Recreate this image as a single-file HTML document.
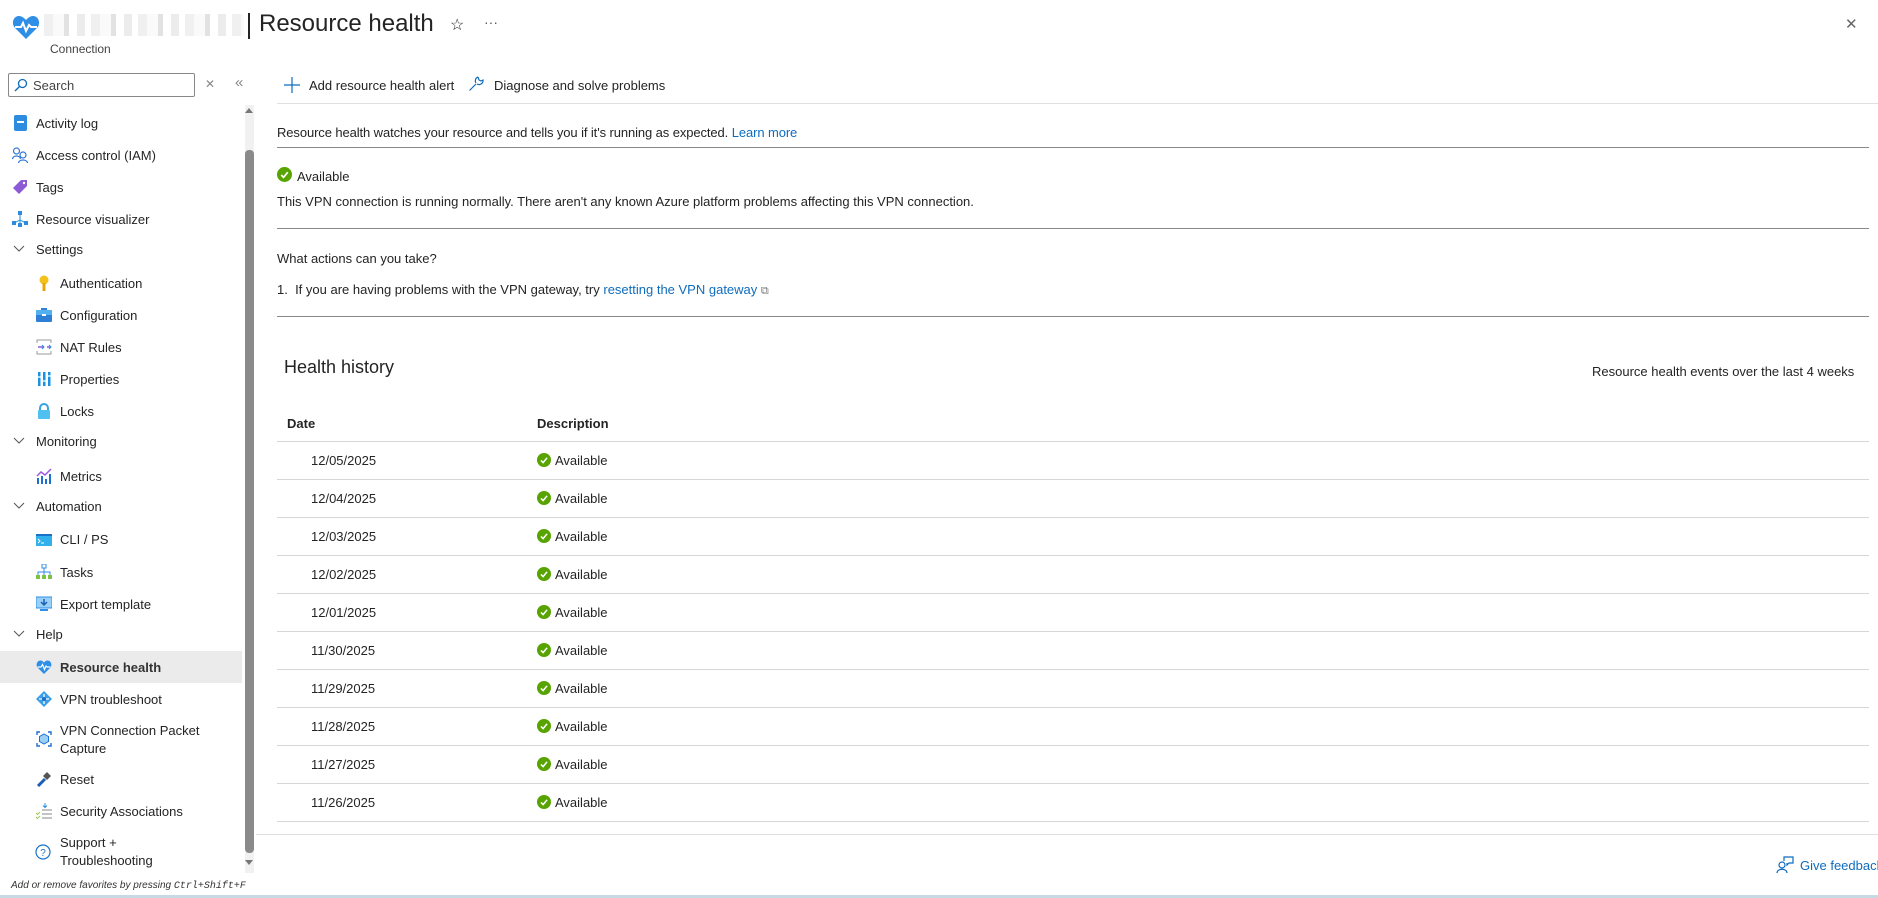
<!DOCTYPE html>
<html><head><meta charset="utf-8"><style>
*{margin:0;padding:0;box-sizing:border-box}
body{width:1878px;height:898px;overflow:hidden;background:#fff;font-family:"Liberation Sans",sans-serif;font-size:13px;color:#242424;position:relative}
.a{position:absolute;white-space:nowrap}
.ic{position:absolute;width:16px;height:16px}
.hl{position:absolute;left:277px;width:1592px;height:1px;background:#8a8886}
.rl{position:absolute;left:277px;width:1592px;height:1px;background:#d6d6d6}
.blue{color:#0f6cbd}
</style></head><body>
<!-- header -->
<svg class="ic" style="left:12px;top:14px;width:28px;height:26px" viewBox="0 0 28 26"><path d="M14 25 L3 14 C-1 10 1 2 7 2 C10 2 12 4 14 6 C16 4 18 2 21 2 C27 2 29 10 25 14 Z" fill="#2f8ee5"/><path d="M3 13 H9 L11 9 L14 17 L17 11 L19 13 H25" fill="none" stroke="#fff" stroke-width="2"/></svg>
<div class="a" style="left:44px;top:14px;width:200px;height:22px;background:repeating-linear-gradient(90deg,#f0f0f0 0 9px,#fafafa 9px 20px,#e2e2e2 20px 25px,#fff 25px 33px,#ececec 33px 41px,#fff 41px 47px)"></div>
<div class="a" style="left:248px;top:13px;width:2px;height:26px;background:#242424"></div>
<div class="a" style="left:259px;top:10px;font-size:24px">Resource health</div>
<div class="a" style="left:450px;top:15px;font-size:16px">☆</div>
<div class="a" style="left:484px;top:14px;font-size:14px;color:#555">···</div>
<div class="a" style="left:50px;top:42px;font-size:12px;color:#444">Connection</div>
<div class="a" style="left:1845px;top:15px;font-size:15px;color:#666">✕</div>
<!-- search -->
<div class="a" style="left:8px;top:73px;width:187px;height:24px;border:1px solid #8a8886;border-radius:2px"></div>
<svg class="ic" style="left:14px;top:78px;width:14px;height:14px" viewBox="0 0 14 14"><circle cx="8.5" cy="5.5" r="4" fill="none" stroke="#0f6cbd" stroke-width="1.3"/><path d="M5.5 8.5 L1 13" stroke="#0f6cbd" stroke-width="1.4"/></svg>
<div class="a" style="left:33px;top:78px;font-size:13px;color:#444">Search</div>
<div class="a" style="left:205px;top:77px;font-size:12px;color:#888">✕</div>
<div class="a" style="left:235px;top:74px;font-size:15px;color:#888">«</div>
<!-- scrollbar -->
<div class="a" style="left:245px;top:105px;width:9px;height:768px;background:#f1f1f1"></div>
<div class="a" style="left:245px;top:150px;width:9px;height:703px;background:#8a8a8a;border-radius:4px"></div>
<div class="a" style="left:245px;top:108px;width:0;height:0;border:4px solid transparent;border-bottom:5px solid #777;border-top:0"></div>
<div class="a" style="left:245px;top:860px;width:0;height:0;border:4px solid transparent;border-top:5px solid #777;border-bottom:0"></div>
<!-- sidebar -->
<div class="a" style="left:0;top:651px;width:242px;height:32px;background:#ebebeb"></div>
<svg class="ic" style="left:13px;top:115px" viewBox="0 0 16 16"><rect x="1" y="0" width="13" height="16" rx="2" fill="#2d8be0"/><rect x="4" y="6" width="7" height="2" fill="#fff"/></svg>
<div class="a" style="left:36px;top:116px">Activity log</div>
<svg class="ic" style="left:12px;top:147px" viewBox="0 0 16 16" fill="none" stroke="#2f78d4" stroke-width="1.2"><circle cx="4.5" cy="4" r="3"/><path d="M0.5 12 C1 8 8 8 8.5 12"/><circle cx="11" cy="8" r="3"/><path d="M6.5 16 C7 12 15 12 15.5 16"/></svg>
<div class="a" style="left:36px;top:148px">Access control (IAM)</div>
<svg class="ic" style="left:12px;top:179px" viewBox="0 0 16 16"><path d="M9 1 L15 1 L15 7 L7 15 L1 9 Z" fill="#8d5ad6"/><circle cx="12" cy="4" r="1.2" fill="#fff"/></svg>
<div class="a" style="left:36px;top:180px">Tags</div>
<svg class="ic" style="left:12px;top:211px" viewBox="0 0 16 16"><path d="M8 3 V9 M2 12 L8 9 L14 12 M8 9 V14" stroke="#3aa0e0" stroke-width="1.2" fill="none"/><rect x="6" y="0" width="4" height="4" fill="#2d8be0"/><rect x="0" y="10" width="4" height="4" fill="#2d8be0"/><rect x="12" y="10" width="4" height="4" fill="#2d8be0"/><rect x="6" y="12" width="4" height="4" fill="#2d8be0"/></svg>
<div class="a" style="left:36px;top:212px">Resource visualizer</div>
<svg class="ic" style="left:13px;top:243px;width:12px;height:10px" viewBox="0 0 12 10"><path d="M1 3 L6 8 L11 3" stroke="#555" fill="none"/></svg>
<div class="a" style="left:36px;top:242px">Settings</div>
<svg class="ic" style="left:36px;top:275px" viewBox="0 0 16 16"><circle cx="8" cy="5" r="4.5" fill="#f2c21b"/><rect x="6.5" y="8" width="3" height="8" fill="#e8a50b"/></svg>
<div class="a" style="left:60px;top:276px">Authentication</div>
<svg class="ic" style="left:36px;top:307px" viewBox="0 0 16 16"><rect x="0" y="3" width="16" height="12" rx="1" fill="#2f7fd6"/><rect x="0" y="3" width="16" height="5" fill="#53b0ef"/><rect x="5" y="1" width="6" height="2" fill="#2f7fd6"/><rect x="6" y="7" width="4" height="2" fill="#fff"/></svg>
<div class="a" style="left:60px;top:308px">Configuration</div>
<svg class="ic" style="left:36px;top:339px" viewBox="0 0 16 16"><path d="M1 4 V1 H15 V4 M1 12 V15 H15 V12" stroke="#999" fill="none"/><path d="M2 8 H8 M11 8 H15" stroke="#8d5ad6" stroke-width="1.5"/><path d="M6 6 L8 8 L6 10 M13 6 L15 8 L13 10" stroke="#2f8ee5" fill="none"/></svg>
<div class="a" style="left:60px;top:340px">NAT Rules</div>
<svg class="ic" style="left:36px;top:371px" viewBox="0 0 16 16"><rect x="2" y="1" width="2.5" height="14" fill="#1e90e0"/><rect x="7" y="1" width="2.5" height="14" fill="#1e90e0"/><rect x="12" y="1" width="2.5" height="14" fill="#1e90e0"/><rect x="2" y="5" width="2.5" height="2" fill="#9fe1f8"/><rect x="7" y="9" width="2.5" height="2" fill="#9fe1f8"/><rect x="12" y="4" width="2.5" height="2" fill="#9fe1f8"/></svg>
<div class="a" style="left:60px;top:372px">Properties</div>
<svg class="ic" style="left:36px;top:403px" viewBox="0 0 16 16"><path d="M4 8 V5 A4 4 0 0 1 12 5 V8" stroke="#36a4e0" stroke-width="2" fill="none"/><rect x="2" y="7" width="12" height="9" rx="1" fill="#50c0f0"/></svg>
<div class="a" style="left:60px;top:404px">Locks</div>
<svg class="ic" style="left:13px;top:435px;width:12px;height:10px" viewBox="0 0 12 10"><path d="M1 3 L6 8 L11 3" stroke="#555" fill="none"/></svg>
<div class="a" style="left:36px;top:434px">Monitoring</div>
<svg class="ic" style="left:36px;top:468px" viewBox="0 0 16 16"><rect x="1" y="10" width="2" height="6" fill="#1e6fd0"/><rect x="5" y="8" width="2" height="8" fill="#1e6fd0"/><rect x="9" y="11" width="2" height="5" fill="#1e6fd0"/><rect x="13" y="6" width="2" height="10" fill="#1e6fd0"/><path d="M1 8 L5 4 L9 7 L15 1" stroke="#9b5de5" stroke-width="1.5" fill="none"/></svg>
<div class="a" style="left:60px;top:469px">Metrics</div>
<svg class="ic" style="left:13px;top:500px;width:12px;height:10px" viewBox="0 0 12 10"><path d="M1 3 L6 8 L11 3" stroke="#555" fill="none"/></svg>
<div class="a" style="left:36px;top:499px">Automation</div>
<svg class="ic" style="left:36px;top:532px" viewBox="0 0 16 16"><rect x="0" y="2" width="16" height="12" fill="#32b0ec"/><rect x="0" y="2" width="16" height="2" fill="#1a73c8"/><path d="M2 7 L4 9 L2 11 M5 11 H8" stroke="#fff" fill="none"/></svg>
<div class="a" style="left:60px;top:532px">CLI / PS</div>
<svg class="ic" style="left:36px;top:564px" viewBox="0 0 16 16"><rect x="6" y="0" width="4" height="4" fill="none" stroke="#2f8ee5"/><path d="M8 4 V8 M2 12 V8 H14 V12 M8 8 V12" stroke="#2f8ee5" fill="none"/><rect x="0" y="11" width="4" height="4" fill="#7cc243"/><rect x="6" y="11" width="4" height="4" fill="#7cc243"/><rect x="12" y="11" width="4" height="4" fill="#7cc243"/></svg>
<div class="a" style="left:60px;top:565px">Tasks</div>
<svg class="ic" style="left:36px;top:596px" viewBox="0 0 16 16"><rect x="0" y="1" width="16" height="11" fill="#9ad0f5" stroke="#2f8ee5"/><path d="M8 3 V9 M5 6 L8 9 L11 6" stroke="#1a5fb4" stroke-width="1.5" fill="none"/><rect x="4" y="13" width="8" height="2" fill="#2f8ee5"/></svg>
<div class="a" style="left:60px;top:597px">Export template</div>
<svg class="ic" style="left:13px;top:628px;width:12px;height:10px" viewBox="0 0 12 10"><path d="M1 3 L6 8 L11 3" stroke="#555" fill="none"/></svg>
<div class="a" style="left:36px;top:627px">Help</div>
<svg class="ic" style="left:36px;top:659px" viewBox="0 0 16 16"><path d="M8 15 L1.5 8.5 C-0.5 6 1 1.5 4.5 1.5 C6 1.5 7 2.5 8 3.5 C9 2.5 10 1.5 11.5 1.5 C15 1.5 16.5 6 14.5 8.5 Z" fill="#2f8ee5"/><path d="M1.5 8 H5 L6.5 5.5 L8.5 10.5 L10 7 L11 8 H14.5" stroke="#fff" fill="none" stroke-width="1.2"/></svg>
<div class="a" style="left:60px;top:660px;font-weight:bold;color:#333">Resource health</div>
<svg class="ic" style="left:36px;top:691px" viewBox="0 0 16 16"><path d="M8 0 L16 8 L8 16 L0 8 Z" fill="#3b9ee8"/><path d="M8 3 V13 M3 8 H13" stroke="#fff" stroke-width="1.3"/><circle cx="8" cy="8" r="2" fill="#1a6fc8"/></svg>
<div class="a" style="left:60px;top:692px">VPN troubleshoot</div>
<svg class="ic" style="left:36px;top:731px" viewBox="0 0 16 16"><path d="M1 4 V1 H4 M12 1 H15 V4 M15 12 V15 H12 M4 15 H1 V12" stroke="#1e6fd0" stroke-width="1.4" fill="none"/><path d="M8 3 L12.5 5.5 V10.5 L8 13 L3.5 10.5 V5.5 Z" fill="#9ad0f5" stroke="#1e6fd0"/></svg>
<div class="a" style="left:60px;top:723px">VPN Connection Packet</div>
<div class="a" style="left:60px;top:741px">Capture</div>
<svg class="ic" style="left:36px;top:771px" viewBox="0 0 16 16"><path d="M2 15 L9 8" stroke="#1a5fb4" stroke-width="3"/><path d="M7 5 L11 1 L15 5 L11 9 Z" fill="#555"/></svg>
<div class="a" style="left:60px;top:772px">Reset</div>
<svg class="ic" style="left:36px;top:803px" viewBox="0 0 16 16"><path d="M9 0 V4 M7 2.5 L9 4.5 L11 2.5" stroke="#2f8ee5" fill="none"/><path d="M6 7 H16 M6 11 H16 M6 15 H16" stroke="#888"/><path d="M0 10 L1.5 11.5 L4 9 M0 14 L1.5 15.5 L4 13" stroke="#9bc850" fill="none"/></svg>
<div class="a" style="left:60px;top:804px">Security Associations</div>
<svg class="ic" style="left:35px;top:844px" viewBox="0 0 16 16"><circle cx="8" cy="8" r="7" fill="none" stroke="#1a73c8" stroke-width="1.2"/><text x="8" y="12" text-anchor="middle" font-size="10" fill="#1a73c8" font-family="Liberation Sans">?</text></svg>
<div class="a" style="left:60px;top:835px">Support +</div>
<div class="a" style="left:60px;top:853px">Troubleshooting</div>
<div class="a" style="left:11px;top:880px;font-size:10px;font-style:italic;color:#333">Add or remove favorites by pressing <span style="font-family:'Liberation Mono',monospace">Ctrl+Shift+F</span></div>
<div class="a" style="left:0;top:895px;width:1878px;height:3px;background:#c7d9e3"></div>
<!-- toolbar -->
<svg class="ic" style="left:284px;top:77px" viewBox="0 0 16 16"><path d="M8 0 V16 M0 8 H16" stroke="#0f6cbd" stroke-width="1.2"/></svg>
<div class="a" style="left:309px;top:78px">Add resource health alert</div>
<svg class="ic" style="left:468px;top:76px" viewBox="0 0 16 16"><path d="M1.5 14.5 L8 8 M10 1 A4 4 0 0 0 8 7 M10 1 L11 4 L13 5 L15 4 A4 4 0 0 1 9 8" stroke="#0f6cbd" stroke-width="1.2" fill="none"/></svg>
<div class="a" style="left:494px;top:78px">Diagnose and solve problems</div>
<div class="a" style="left:277px;top:103px;width:1601px;height:1px;background:#e0e0e0"></div>
<!-- content -->
<div class="a" style="left:277px;top:125px;letter-spacing:-0.1px">Resource health watches your resource and tells you if it's running as expected. <span class="blue">Learn more</span></div>
<div class="hl" style="top:147px"></div>
<svg class="ic" style="left:277px;top:167px;width:15px;height:15px" viewBox="0 0 16 16"><circle cx="8" cy="8" r="8" fill="#57a300"/><path d="M4.5 8.5 L7 11 L11.5 5.5" stroke="#fff" stroke-width="1.8" fill="none"/></svg>
<div class="a" style="left:297px;top:169px">Available</div>
<div class="a" style="left:277px;top:194px">This VPN connection is running normally. There aren't any known Azure platform problems affecting this VPN connection.</div>
<div class="hl" style="top:228px"></div>
<div class="a" style="left:277px;top:251px">What actions can you take?</div>
<div class="a" style="left:277px;top:282px">1.&nbsp; If you are having problems with the VPN gateway, try <span class="blue">resetting the VPN gateway</span> <span style="color:#777;font-size:11px">⧉</span></div>
<div class="hl" style="top:316px"></div>
<div class="a" style="left:284px;top:357px;font-size:18px">Health history</div>
<div class="a" style="left:1592px;top:364px">Resource health events over the last 4 weeks</div>
<div class="a" style="left:287px;top:416px;font-weight:bold">Date</div>
<div class="a" style="left:537px;top:416px;font-weight:bold">Description</div>
<div class="rl" style="top:441px"></div>
<div id="rows"></div>
<div class="a" style="left:256px;top:834px;width:1622px;height:1px;background:#e0e0e0"></div>
<svg class="ic" style="left:1776px;top:856px;width:18px;height:18px" viewBox="0 0 18 18"><circle cx="6" cy="9" r="3" fill="none" stroke="#0f6cbd" stroke-width="1.2"/><path d="M1 17 C1 12 11 12 11 17" stroke="#0f6cbd" stroke-width="1.2" fill="none"/><path d="M8 5 V1 H17 V7 H13 L11 9 V7" stroke="#0f6cbd" stroke-width="1.2" fill="none"/></svg>
<div class="a blue" style="left:1800px;top:858px">Give feedback</div>
<script>
var d=["12/05/2025","12/04/2025","12/03/2025","12/02/2025","12/01/2025","11/30/2025","11/29/2025","11/28/2025","11/27/2025","11/26/2025"],h="";
for(var i=0;i<10;i++){var t=441+i*38;
h+='<div class="a" style="left:311px;top:'+(t+12)+'px">'+d[i]+'</div>';
h+='<svg class="ic" style="left:537px;top:'+(t+12)+'px;width:14px;height:14px" viewBox="0 0 16 16"><circle cx="8" cy="8" r="8" fill="#57a300"/><path d="M4.5 8.5 L7 11 L11.5 5.5" stroke="#fff" stroke-width="1.8" fill="none"/></svg>';
h+='<div class="a" style="left:555px;top:'+(t+12)+'px">Available</div>';
h+='<div class="rl" style="top:'+(t+38)+'px"></div>';}
document.getElementById("rows").innerHTML=h;
</script>
</body></html>
